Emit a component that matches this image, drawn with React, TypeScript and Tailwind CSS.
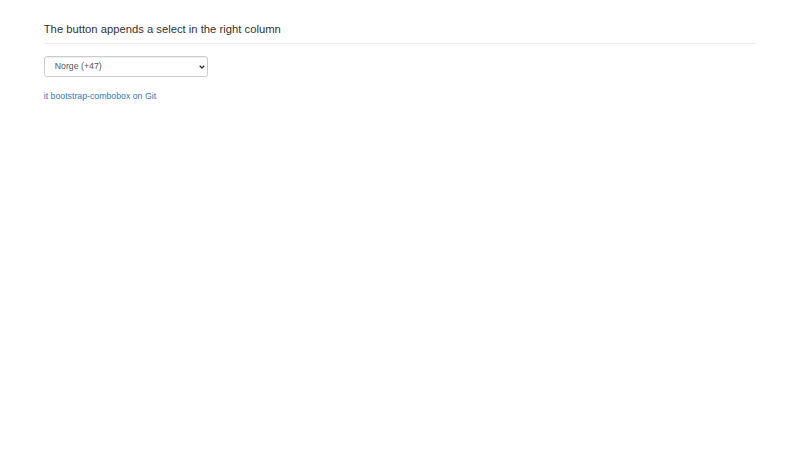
import React from "react";

export default function App() {
  return (
    <div className="min-h-[450px] w-full bg-white" style={{ fontFamily: '"Liberation Sans", Arial, sans-serif' }}>
      <div className="mx-auto w-[731.25px] px-[9.375px] pt-[23px]">
        <h4 className="border-b border-[#eeeeee] pb-[8px] text-[11.25px] font-normal leading-[1.1] text-[#333333]">
          The button appends a select in the right column
        </h4>
        <div className="relative mt-[12px] w-[164px]">
          <select
            defaultValue="47"
            className="block h-[21px] w-[164px] appearance-none rounded-[2.5px] border border-[#cccccc] bg-white pl-[10px] pr-[16px] text-[8.75px] text-[#555555] shadow-[inset_0_1px_1px_rgba(0,0,0,0.075)] outline-none"
          >
            <option value="47">Norge (+47)</option>
            <option value="46">Sverige (+46)</option>
            <option value="45">Danmark (+45)</option>
          </select>
          <svg
            className="pointer-events-none absolute right-[3px] top-[8.5px]"
            width="6"
            height="4"
            viewBox="0 0 6 4"
          >
            <path d="M0.7 0.7 L3 3 L5.3 0.7" fill="none" stroke="#333" strokeWidth="1.3" />
          </svg>
        </div>
        <p className="mt-[12.5px] text-[8.75px] leading-[1.42857]">
          <a href="#" className="text-[#337ab7] no-underline">
            it bootstrap-combobox on Git
          </a>
        </p>
      </div>
    </div>
  );
}
